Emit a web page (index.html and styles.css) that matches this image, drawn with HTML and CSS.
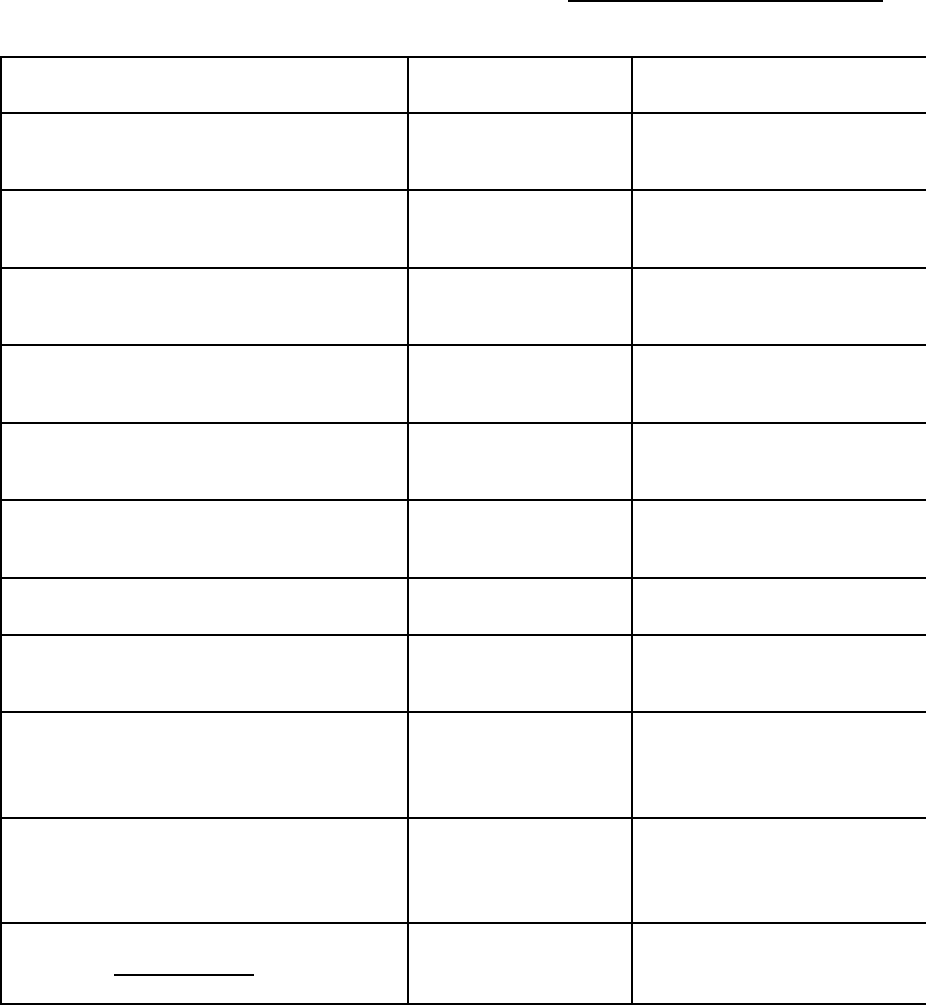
FILE: index.html
```html
<!DOCTYPE html>
<html>
<head>
<meta charset="utf-8">
<link rel="stylesheet" href="styles.css">
</head>
<body>
<div class="header">
  <div class="blank-line"></div>
</div>
<table class="grid">
  <colgroup>
    <col class="c1">
    <col class="c2">
    <col class="c3">
  </colgroup>
  <tr class="r56"><td></td><td></td><td></td></tr>
  <tr class="r77"><td></td><td></td><td></td></tr>
  <tr class="r78"><td></td><td></td><td></td></tr>
  <tr class="r77"><td></td><td></td><td></td></tr>
  <tr class="r78"><td></td><td></td><td></td></tr>
  <tr class="r77"><td></td><td></td><td></td></tr>
  <tr class="r78"><td></td><td></td><td></td></tr>
  <tr class="r57"><td></td><td></td><td></td></tr>
  <tr class="r77"><td></td><td></td><td></td></tr>
  <tr class="r106"><td></td><td></td><td></td></tr>
  <tr class="r105"><td></td><td></td><td></td></tr>
  <tr class="r82"><td><div class="sign-line"></div></td><td></td><td></td></tr>
</table>
</body>
</html>
```
FILE: styles.css
```css
html, body {
  margin: 0;
  padding: 0;
  background: #fff;
  font-family: "Liberation Serif", "Times New Roman", serif;
}
.header {
  height: 56px;
  position: relative;
}
.blank-line {
  margin-left: 568px;
  width: 315px;
  border-top: 2px solid #000;
}
.grid {
  border-collapse: collapse;
  table-layout: fixed;
  width: 926px;
  margin-left: 0;
}
.grid td {
  border: 2px solid #000;
  padding: 0;
}
.c1 { width: 407px; }
.c2 { width: 224px; }
.c3 { width: 295px; }
.r56 { height: 56px; }
.r57 { height: 57px; }
.r77 { height: 77px; }
.r78 { height: 78px; }
.r82 { height: 81px; }
.r105 { height: 105px; }
.r106 { height: 106px; }
.sign-line {
  margin-left: 112px;
  margin-top: 22px;
  width: 140px;
  border-top: 2px solid #000;
}
```
